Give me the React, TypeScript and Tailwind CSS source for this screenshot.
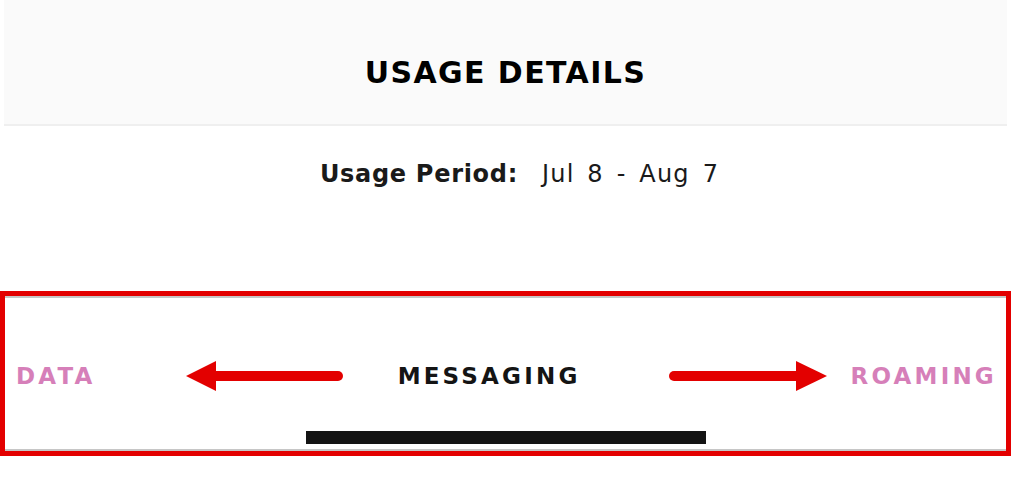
const tabFont = { fontFamily: '"DejaVu Sans", "Liberation Sans", sans-serif' };

function ArrowLeft() {
  return (
    <svg width="158" height="30" viewBox="0 0 158 30" className="shrink-0">
      <polygon points="0,15 30,0 30,30" fill="#e30000" />
      <line x1="28" y1="15" x2="152" y2="15" stroke="#e30000" strokeWidth="10" strokeLinecap="round" />
    </svg>
  );
}

function ArrowRight() {
  return (
    <svg width="158" height="30" viewBox="0 0 158 30" className="shrink-0">
      <line x1="5" y1="15" x2="130" y2="15" stroke="#e30000" strokeWidth="10" strokeLinecap="round" />
      <polygon points="158,15 127,0 127,30" fill="#e30000" />
    </svg>
  );
}

export default function App() {
  return (
    <div className="w-full min-h-screen bg-white" style={tabFont}>
      {/* Header */}
      <div className="mx-[4px] h-[126px] bg-[#fafafa] border-b-2 border-[#efefef] flex items-center justify-center pt-[22px]">
        <h1 className="text-[30px] font-bold tracking-[1.4px] text-black leading-none">USAGE DETAILS</h1>
      </div>

      {/* Usage period */}
      <div className="mt-[33px] h-[30px] flex items-center justify-center pl-[28px] text-[24px] leading-[30px] text-[#1a1a1a]">
        <span className="font-bold tracking-[0.7px]">Usage Period:</span>
        <span className="ml-[24px] tracking-[1.2px] [word-spacing:4px]">Jul 8 - Aug 7</span>
      </div>

      {/* Tabs */}
      <div className="mt-[102px] border-[5px] border-[#e30000]">
        <div className="border-y-2 border-[#c6c6c6] h-[155px] flex flex-col">
          <div className="mt-[63px] h-[30px] flex items-center pl-[11px] text-[23px] font-bold tracking-[3.2px] leading-none">
            <span className="text-[#d67fb9]">DATA</span>
            <div className="ml-[90px]">
              <ArrowLeft />
            </div>
            <span className="ml-[54px] text-[#141414]">MESSAGING</span>
            <div className="ml-[88px]">
              <ArrowRight />
            </div>
            <span className="ml-[24px] text-[#d67fb9]">ROAMING</span>
          </div>
          <div className="mt-[40px] mx-auto w-[400px] h-[13px] bg-[#141414]" />
        </div>
      </div>
    </div>
  );
}
